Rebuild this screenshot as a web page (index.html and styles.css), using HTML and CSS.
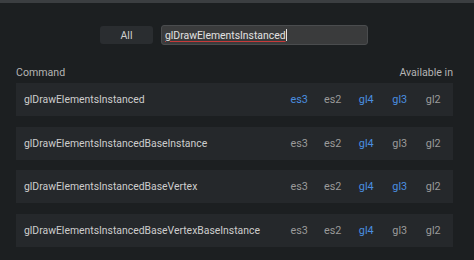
FILE: index.html
```html
<!DOCTYPE html>
<html lang="en">
<head>
    <meta charset="UTF-8">
    <title>Commands</title>
    <link rel="stylesheet" href="styles.css">
</head>
<body>
    <div class="top-strip"></div>
    <div class="page">
        <div class="search-bar">
            <button class="filter-button">All</button>
            <div class="search-input"><span class="typed">glDrawElementsInstanced</span><span class="caret"></span></div>
        </div>
        <div class="table-head">
            <span>Command</span>
            <span>Available in</span>
        </div>
        <div class="rows">
            <div class="row">
                <div class="name">glDrawElementsInstanced</div>
                <div class="apis">
                    <span class="on">es3</span><span>es2</span><span class="on">gl4</span><span class="on">gl3</span><span>gl2</span>
                </div>
            </div>
            <div class="row">
                <div class="name">glDrawElementsInstancedBaseInstance</div>
                <div class="apis">
                    <span>es3</span><span>es2</span><span class="on">gl4</span><span>gl3</span><span>gl2</span>
                </div>
            </div>
            <div class="row">
                <div class="name">glDrawElementsInstancedBaseVertex</div>
                <div class="apis">
                    <span>es3</span><span>es2</span><span class="on">gl4</span><span class="on">gl3</span><span>gl2</span>
                </div>
            </div>
            <div class="row">
                <div class="name">glDrawElementsInstancedBaseVertexBaseInstance</div>
                <div class="apis">
                    <span>es3</span><span>es2</span><span class="on">gl4</span><span>gl3</span><span>gl2</span>
                </div>
            </div>
        </div>
    </div>
</body>
</html>
```

FILE: styles.css
```css
* {
    margin: 0;
    padding: 0;
    box-sizing: border-box;
    font-family: 'Roboto', 'Liberation Sans', sans-serif;
}
body {
    background-color: #1c1f21;
    color: #c8c8c8;
    width: 474px;
    height: 260px;
    overflow: hidden;
}
.top-strip {
    height: 3px;
    background-color: #3b3e41;
}
.page {
    padding: 0 21px 0 16px;
}
.search-bar {
    display: flex;
    align-items: center;
    margin-top: 22px;
    padding-left: 84px;
    gap: 8px;
}
.filter-button {
    width: 53px;
    height: 18px;
    background-color: #2a2d30;
    color: #cfcfcf;
    border: none;
    border-radius: 3px;
    font-size: 10.5px;
}
.search-input {
    display: flex;
    align-items: center;
    width: 207px;
    height: 20px;
    background-color: #3a3b3c;
    border: 1px solid #4a4c4e;
    border-radius: 3px;
    padding-left: 3px;
    font-size: 10.4px;
    color: #e2e2e2;
}
.typed {
    text-decoration: underline solid #c83a3a;
    text-decoration-thickness: 1px;
    text-underline-offset: 2px;
}
.caret {
    width: 1px;
    height: 12px;
    background-color: #e2e2e2;
}
.table-head {
    display: flex;
    justify-content: space-between;
    margin-top: 21px;
    font-size: 10.6px;
    color: #b4b4b4;
}
.rows {
    display: flex;
    flex-direction: column;
    gap: 10.5px;
    margin-top: 4px;
}
.row {
    display: flex;
    align-items: center;
    justify-content: space-between;
    height: 33px;
    background-color: #25282b;
    padding: 0 3px 0 8px;
    font-size: 10.4px;
}
.name {
    color: #cdcdcd;
}
.apis {
    display: flex;
    font-size: 10.8px;
}
.apis span {
    width: 33.5px;
    text-align: center;
    color: #9a9a9a;
}
.apis span.on {
    color: #4a8fe0;
}
```
